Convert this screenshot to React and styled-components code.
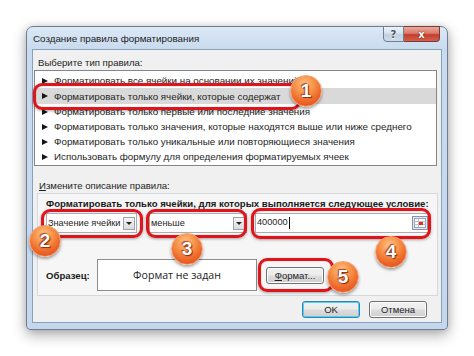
import React from 'react';
import styled, { createGlobalStyle } from 'styled-components';

const Global = createGlobalStyle`
  html, body { margin: 0; padding: 0; background: #ffffff; }
  body { font-family: "Liberation Sans", Arial, sans-serif; color: #1a1a1a; }
  * { box-sizing: border-box; }
`;

const Page = styled.div`
  position: relative;
  width: 474px;
  height: 356px;
  padding: 26px 0 0 26px;
  overflow: hidden;
  background: #fff;
`;

const Window = styled.div`
  width: 422px;
  height: 304px;
  border: 1px solid #6d7e94;
  border-radius: 7px 7px 4px 4px;
  background: linear-gradient(180deg, #dce8f5 0px, #c9dbef 22px, #c4d7ec 100%);
  box-shadow: 0 5px 14px rgba(0, 0, 0, 0.32), 0 0 6px rgba(0, 0, 0, 0.12);
  padding: 0 5px 6px;
  display: flex;
  flex-direction: column;
`;

const TitleBar = styled.div`
  height: 22px;
  display: flex;
  align-items: flex-start;
`;

const Title = styled.div`
  font-family: "Liberation Sans", Arial, sans-serif;
  font-size: 9.8px;
  color: #1c1c1c;
  padding: 6px 0 0 1px;
`;

const Controls = styled.div`
  margin-left: auto;
  margin-right: 2px;
  margin-top: -1px;
  display: flex;
`;

const CtrlButton = styled.div`
  height: 16px;
  width: ${p => (p.$close ? '36px' : '21px')};
  border: 1px solid ${p => (p.$close ? '#7a3b35' : '#6e7f93')};
  border-left: ${p => (p.$close ? 'none' : undefined)};
  border-radius: ${p => (p.$close ? '0 0 4px 0' : '0 0 0 4px')};
  background: ${p =>
    p.$close
      ? 'linear-gradient(180deg, #e9aa9c 0%, #d9796a 45%, #c53d2c 55%, #d2604d 100%)'
      : 'linear-gradient(180deg, #eef3f9 0%, #d6e1ee 45%, #c2d0e1 55%, #cfdcec 100%)'};
  display: flex;
  align-items: center;
  justify-content: center;
  color: ${p => (p.$close ? '#fff' : '#4a5563')};
  font-family: "DejaVu Sans", sans-serif;
  font-weight: bold;
  font-size: 10px;
  text-shadow: ${p => (p.$close ? '0 0 1px #5a1a10, 0 0 1px #5a1a10' : '0 1px 0 #fff')};
`;

const Client = styled.div`
  flex: 1;
  background: #f0f0f0;
  border: 1px solid #8aa0ba;
  padding: 7px 4px 0 1px;
  display: flex;
  flex-direction: column;
`;

const SectionLabel = styled.div`
  font-size: 9.6px;
  line-height: 12px;
  height: 12px;
  margin-left: ${p => p.$indent}px;
  margin-top: ${p => p.$top || 0}px;
  color: #1e1e1e;
  u { text-decoration: underline; }
`;

const RuleList = styled.div`
  margin-top: 1px;
  width: 403px;
  background: #fff;
  border: 1px solid #82878f;
  padding: 2px 0 1px;
`;

const RuleRow = styled.div`
  height: ${p => (p.$selected ? 16 : 15)}px;
  display: flex;
  align-items: center;
  padding-left: 7px;
  font-size: 9.8px;
  color: #1e1e1e;
  background: ${p => (p.$selected ? '#d9d9d9' : 'transparent')};
`;

const Arrow = styled.span`
  width: 0;
  height: 0;
  border-left: 6px solid #151515;
  border-top: 3.5px solid transparent;
  border-bottom: 3.5px solid transparent;
  margin-right: 6px;
`;

const Group = styled.div`
  margin: 1px 0 0 3px;
  width: 401px;
  height: 103px;
  border: 1px solid #d3d9df;
  background: #f6f6f6;
  padding: 4px 0 0 8px;
  display: flex;
  flex-direction: column;
`;

const GroupHeader = styled.div`
  font-size: 9.6px;
  font-weight: bold;
  line-height: 12px;
  color: #1a1a1a;
`;

const ConditionRow = styled.div`
  margin-top: 3px;
  display: flex;
  align-items: center;
`;

const Combo = styled.div`
  width: ${p => p.$w}px;
  margin-left: ${p => p.$ml || 0}px;
  height: 20px;
  background: #fff;
  border: 1px solid #abadb3;
  display: flex;
  align-items: center;
  padding: 0 1px 0 1px;
  font-size: 9.2px;
  color: #1e1e1e;
`;

const ComboText = styled.span`
  flex: 1;
  white-space: nowrap;
  overflow: hidden;
`;

const DropButton = styled.div`
  width: 12px;
  height: 13px;
  border: 1px solid #9aa3ae;
  background: linear-gradient(180deg, #f4f4f4, #dcdcdc);
  display: flex;
  align-items: center;
  justify-content: center;
`;

const Caret = styled.span`
  width: 0;
  height: 0;
  border-left: 3px solid transparent;
  border-right: 3px solid transparent;
  border-top: 3px solid #222;
`;

const Cursor = styled.span`
  display: inline-block;
  width: 1px;
  height: 12px;
  background: #111;
  vertical-align: middle;
  margin-left: 1px;
`;

const PickButton = styled.div`
  width: 16px;
  height: 14px;
  display: flex;
  align-items: center;
  justify-content: center;
`;

const PreviewRow = styled.div`
  margin-top: 26px;
  display: flex;
  align-items: center;
`;

const PreviewLabel = styled.div`
  width: 51px;
  font-size: 9.6px;
  font-weight: bold;
  color: #1a1a1a;
`;

const PreviewBox = styled.div`
  width: 160px;
  height: 32px;
  background: #fff;
  border: 1px solid #8d8d8d;
  display: flex;
  align-items: center;
  justify-content: center;
  font-family: "Open Sans", "Liberation Sans", sans-serif;
  font-size: 10.6px;
  color: #222;
`;

const Button = styled.div`
  width: 58px;
  height: 17px;
  margin-left: ${p => p.$ml || 0}px;
  border: 1px solid ${p => (p.$default ? '#3c7fb1' : '#707070')};
  border-radius: 3px;
  background: linear-gradient(180deg, #f2f2f2 0%, #ebebeb 48%, #dddddd 52%, #cfcfcf 100%);
  box-shadow: ${p => (p.$default ? 'inset 0 0 0 1px #48d4f8' : 'inset 0 0 0 1px #fcfcfc')};
  display: flex;
  align-items: center;
  justify-content: center;
  font-size: 9.5px;
  color: #1e1e1e;
  u { text-decoration: underline; }
`;

const ButtonRow = styled.div`
  margin-top: 5px;
  display: flex;
  justify-content: flex-end;
  padding-right: 10px;
`;

const Ring = styled.div.attrs(p => ({
  style: { left: p.$x, top: p.$y, width: p.$w, height: p.$h },
}))`
  position: absolute;
  border: 3px solid #e0141b;
  border-radius: 9px;
  box-shadow: 0 1px 3px rgba(0, 0, 0, 0.35), inset 0 0 1px rgba(120, 0, 0, 0.5);
  pointer-events: none;
`;

const Badge = styled.div.attrs(p => ({
  style: { left: p.$cx - 16, top: p.$cy - 16 },
}))`
  position: absolute;
  width: 32px;
  height: 32px;
  border-radius: 50%;
  background: radial-gradient(circle at 45% 28%, #fdc58a 0%, #f89a4f 30%, #ee6a2b 62%, #d8421b 100%);
  border: 1px solid #f4a57a;
  box-shadow: 0 2px 3px rgba(0, 0, 0, 0.35);
  display: flex;
  align-items: center;
  justify-content: center;
  font-family: "Liberation Sans", Arial, sans-serif;
  font-weight: bold;
  font-size: 19px;
  color: #fff;
  text-shadow: 0 0 1px #8a2a0c, 1px 1px 1px #8a2a0c, -1px -1px 1px #b3481f;
`;

const rules = [
  'Форматировать все ячейки на основании их значений',
  'Форматировать только ячейки, которые содержат',
  'Форматировать только первые или последние значения',
  'Форматировать только значения, которые находятся выше или ниже среднего',
  'Форматировать только уникальные или повторяющиеся значения',
  'Использовать формулу для определения форматируемых ячеек',
];

export default function App() {
  return (
    <Page>
      <Global />
      <Window>
        <TitleBar>
          <Title>Создание правила форматирования</Title>
          <Controls>
            <CtrlButton>?</CtrlButton>
            <CtrlButton $close>x</CtrlButton>
          </Controls>
        </TitleBar>
        <Client>
          <SectionLabel $indent={4}>Выберите тип правила:</SectionLabel>
          <RuleList>
            {rules.map((r, i) => (
              <RuleRow key={i} $selected={i === 1}>
                <Arrow />
                {r}
              </RuleRow>
            ))}
          </RuleList>
          <SectionLabel $indent={5} $top={14}>
            <u>И</u>змените описание правила:
          </SectionLabel>
          <Group>
            <GroupHeader>Форматировать только ячейки, для которых выполняется следующее условие:</GroupHeader>
            <ConditionRow>
              <Combo $w={91}>
                <ComboText>Значение ячейки</ComboText>
                <DropButton><Caret /></DropButton>
              </Combo>
              <Combo $w={98} $ml={12}>
                <ComboText>меньше</ComboText>
                <DropButton><Caret /></DropButton>
              </Combo>
              <Combo $w={175} $ml={8}>
                <ComboText>400000<Cursor /></ComboText>
                <PickButton>
                  <svg width="16" height="14" viewBox="0 0 16 14">
                    <rect x="0.5" y="0.5" width="15" height="13" fill="#dfe6ef" stroke="#8794a6" />
                    <rect x="2.5" y="2.5" width="11" height="9" fill="#fff" stroke="#9aa6b5" />
                    <line x1="2.5" y1="5.5" x2="13.5" y2="5.5" stroke="#b7c1cd" />
                    <line x1="2.5" y1="8.5" x2="13.5" y2="8.5" stroke="#b7c1cd" />
                    <line x1="6.5" y1="2.5" x2="6.5" y2="11.5" stroke="#b7c1cd" />
                    <rect x="7" y="6" width="4" height="3" fill="#e0302a" />
                  </svg>
                </PickButton>
              </Combo>
            </ConditionRow>
            <PreviewRow>
              <PreviewLabel>Образец:</PreviewLabel>
              <PreviewBox>Формат не задан</PreviewBox>
              <Button $ml={9}><u>Ф</u>ормат...</Button>
            </PreviewRow>
          </Group>
          <ButtonRow>
            <Button $default>OK</Button>
            <Button $ml={9}>Отмена</Button>
          </ButtonRow>
        </Client>
      </Window>

      <Ring $x={33} $y={83} $w={268} $h={27} />
      <Ring $x={41} $y={209} $w={102} $h={29} />
      <Ring $x={146} $y={209} $w={101} $h={29} />
      <Ring $x={251} $y={208} $w={180} $h={31} />
      <Ring $x={258} $y={258} $w={76} $h={34} />

      <Badge $cx={306} $cy={91}>1</Badge>
      <Badge $cx={45} $cy={241}>2</Badge>
      <Badge $cx={187} $cy={249}>3</Badge>
      <Badge $cx={391} $cy={252}>4</Badge>
      <Badge $cx={343} $cy={277}>5</Badge>
    </Page>
  );
}
